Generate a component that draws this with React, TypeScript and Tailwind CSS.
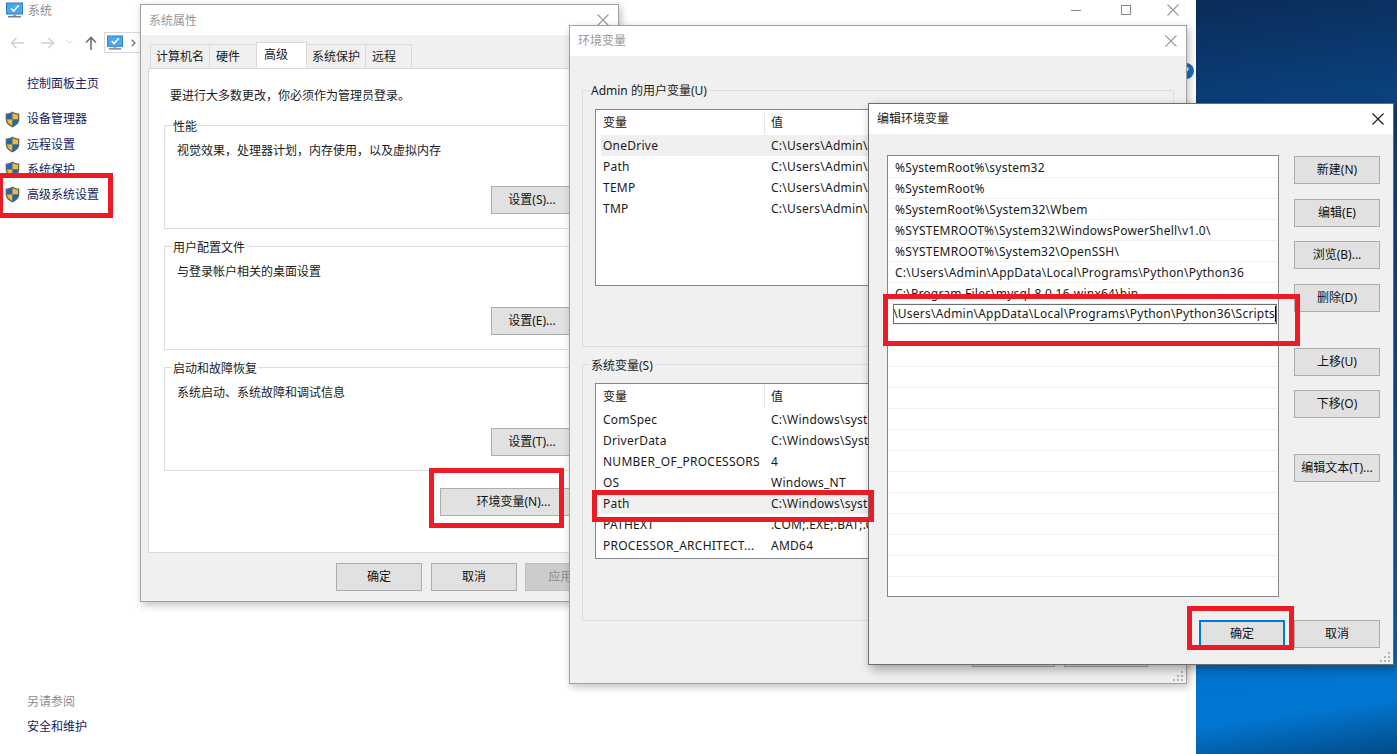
import React from "react";

const Close = ({ dark = false, className = "" }: { dark?: boolean; className?: string }) => (
  <svg width="12" height="12" viewBox="0 0 12 12" className={className} stroke={dark ? "#1a1a1a" : "#9a9a9a"} strokeWidth="1.1" fill="none">
    <path d="M.5.5l11 11M11.5.5l-11 11" />
  </svg>
);

const Monitor = ({ size = 17 }: { size?: number }) => (
  <svg width={size} height={size} viewBox="0 0 17 16">
    <rect x="0.5" y="0.5" width="16" height="11" fill="#4aa8ec" stroke="#2a7fc4" />
    <path d="M5 6l2.6 2.6L12.5 3" stroke="#fff" strokeWidth="1.6" fill="none" />
    <rect x="7" y="12" width="3" height="1.5" fill="#8aa0b4" />
    <rect x="2" y="13.5" width="13" height="1.5" fill="#6d8296" />
  </svg>
);

const Shield = () => (
  <svg width="15" height="17" viewBox="0 0 15 17" className="shrink-0">
    <path d="M7.5.5C5.5 2 3 2.6.7 2.6v6c0 3.6 3 6.200 6.800 7.900 3.800-1.700 6.800-4.300 6.800-7.900v-6C12 2.600 9.500 2 7.500.5z" fill="#5f6468" />
    <path d="M7.500 2C6 3 4 3.500 2 3.700V8.500h5.500z" fill="#1b69b8" />
    <path d="M7.500 2C9 3 11 3.500 13 3.700V8.500H7.500z" fill="#f6b928" />
    <path d="M2 8.500h5.500v6.300C4.500 13.400 2 11.400 2 8.500z" fill="#f6b928" />
    <path d="M13 8.500H7.500v6.300c3-1.400 5.500-3.400 5.500-6.300z" fill="#1b69b8" />
  </svg>
);

const Grip = () => (
  <svg width="11" height="11" viewBox="0 0 11 11" fill="#b5b5b5">
    <rect x="8" y="0" width="2" height="2" />
    <rect x="4" y="4" width="2" height="2" />
    <rect x="8" y="4" width="2" height="2" />
    <rect x="0" y="8" width="2" height="2" />
    <rect x="4" y="8" width="2" height="2" />
    <rect x="8" y="8" width="2" height="2" />
  </svg>
);

const Btn = ({ children, className = "" }: { children: React.ReactNode; className?: string }) => (
  <div className={`h-[28px] shrink-0 flex items-center justify-center bg-[#e1e1e1] border border-[#adadad] text-[#111] whitespace-nowrap ${className}`}>
    {children}
  </div>
);

const Group = ({ title, children, className = "", labelClass = "-top-[7px]" }: { title: string; children: React.ReactNode; className?: string; labelClass?: string }) => (
  <div className={`relative border border-[#dcdcdc] ${className}`}>
    <span className={`absolute left-[7px] bg-inherit px-[1px] leading-[16px] whitespace-nowrap ${labelClass}`}>{title}</span>
    {children}
  </div>
);

const PerfGroup = ({ title, text, btn }: { title: string; text: string; btn: string }) => (
  <Group title={title} className="h-[104px] w-[431px] bg-white">
    <div className="pl-[12px] pt-[17px] h-[44px] leading-[16px]">{text}</div>
    <Btn className="w-[82px] ml-[326px] mt-[16px]">{btn}</Btn>
  </Group>
);

const VarList = ({ rows, active, className = "" }: { rows: [string, string][]; active: string; className?: string }) => (
  <div className={`ml-[12px] w-[566px] bg-white border border-[#828790] overflow-hidden pl-[5px] ${className}`}>
    <div className="flex h-[25px] items-center">
      <div className="w-[163px] pl-[2px] text-[#111]">变量</div>
      <div className="w-px h-[23px] bg-[#e5e5e5]" />
      <div className="pl-[6px]">值</div>
    </div>
    {rows.map(([k, v]) => (
      <div key={k} className={`flex h-[21px] items-center whitespace-nowrap tracking-[0.25px] ${k === active ? "bg-[#f0f0f0]" : ""}`}>
        <div className="w-[164px] pl-[2px] overflow-hidden">{k}</div>
        <div className="ml-[6px] w-[98px] overflow-hidden">{v}</div>
      </div>
    ))}
  </div>
);

const pathRows = [
  "%SystemRoot%\\system32",
  "%SystemRoot%",
  "%SystemRoot%\\System32\\Wbem",
  "%SYSTEMROOT%\\System32\\WindowsPowerShell\\v1.0\\",
  "%SYSTEMROOT%\\System32\\OpenSSH\\",
  "C:\\Users\\Admin\\AppData\\Local\\Programs\\Python\\Python36",
  "C:\\Program Files\\mysql-8.0.16-winx64\\bin",
];

const Red = ({ className }: { className: string }) => (
  <div className={`absolute border-[5px] border-[#ed1c24] ${className}`} />
);

const tabOff = "border border-b-0 border-[#d9d9d9] bg-[#f0f0f0] flex items-center pt-px";

export default function App() {
  return (
    <div className="relative w-[1397px] h-[754px] overflow-hidden flex text-[12px] leading-[16px] text-[#1a1a1a] font-['Noto_Sans','Noto_Sans_CJK_SC',sans-serif]">
      {/* Main system window */}
      <div className="w-[1196px] h-full bg-white flex flex-col">
        <div className="flex h-[20px] items-center justify-between">
          <div className="flex items-center">
            <div className="ml-[6px] mr-[5px] flex"><Monitor /></div>
            <span className="text-[#8c8c8c] pt-[2px]">系统</span>
          </div>
          <div className="flex items-center text-[#8a8a8a]">
            <div className="w-[10px] h-px bg-[#8a8a8a] mr-[40px]" />
            <div className="w-[10px] h-[10px] border border-[#8a8a8a] mr-[36px]" />
            <Close className="mr-[17px]" />
          </div>
        </div>
        <div className="flex h-[21px] mt-[12px] items-center text-[#c8c8c8]">
          <svg width="14" height="12" viewBox="0 0 14 12" className="ml-[10px]" fill="none" stroke="#d0d0d0" strokeWidth="1.5"><path d="M14 6H1.500M6.500 1l-5 5 5 5" /></svg>
          <svg width="14" height="12" viewBox="0 0 14 12" className="ml-[17px]" fill="none" stroke="#d0d0d0" strokeWidth="1.5"><path d="M0 6h12.500M7.500 1l5 5-5 5" /></svg>
          <svg width="7" height="5" viewBox="0 0 7 5" className="ml-[11px]" fill="none" stroke="#d0d0d0"><path d="M.5.500l3 3 3-3" /></svg>
          <svg width="12" height="14" viewBox="0 0 12 14" className="ml-[12px]" fill="none" stroke="#6e6e6e" strokeWidth="1.600"><path d="M6 14V1.500M1 6.500l5-5 5 5" /></svg>
          <div className="ml-[7px] h-[21px] w-[60px] border border-[#d9d9d9] flex items-center pl-[2px]">
            <Monitor size={16} />
            <svg width="5" height="8" viewBox="0 0 5 8" className="ml-[8px]" fill="none" stroke="#777" strokeWidth="1.300"><path d="M.7.700L4 4 .7 7.300" /></svg>
          </div>
        </div>
        <div className="mt-[23px] ml-[27px] leading-[16px] text-[#14225f]">控制面板主页</div>
        <div className="mt-[14px] flex flex-col text-[#14225f]">
          {["设备管理器", "远程设置", "系统保护", "高级系统设置"].map((t, i) => (
            <div key={t} className={`flex items-center pl-[5px] h-[25px] gap-[7px] ${i === 0 ? "h-[26px]" : ""}`}>
              <Shield />
              <span>{t}</span>
            </div>
          ))}
        </div>
        <div className="mt-auto ml-[27px] mb-[19px] flex flex-col gap-[9px] leading-[16px]">
          <span className="text-[#8c8c8c]">另请参阅</span>
          <span className="text-[#14225f]">安全和维护</span>
        </div>
      </div>

      {/* Desktop wallpaper */}
      <div className="flex-1 h-full bg-[linear-gradient(172deg,#0a2c58_0%,#0a4a8e_22%,#0a5ba8_55%,#0076d2_90%,#0276d0_93%,#024b88_100%)]" />

      {/* Help button, mostly behind the dialog */}
      <div className="absolute left-[1178px] top-[63px] w-[16px] h-[16px] rounded-full bg-[#1570c4] flex items-center justify-center text-white font-bold text-[11px]">
        ?
      </div>

      {/* 系统属性 */}
      <div className="absolute left-[140px] top-[4px] w-[479px] h-[598px] bg-[#f0f0f0] border border-[#a0a0a0] shadow-[2px_3px_8px_rgba(0,0,0,0.25)] flex flex-col">
        <div className="h-[30px] bg-white flex items-center justify-between pl-[8px] pr-[9px] text-[#999]">
          <span className="pt-px">系统属性</span>
          <Close />
        </div>
        <div className="pt-[9px] px-[7px] flex flex-col">
          <div className="flex h-[24px] pl-[2px]">
            <div className={`w-[59px] border-r-0 pl-[5px] ${tabOff}`}>计算机名</div>
            <div className={`w-[47px] border-r-0 pl-[6px] ${tabOff}`}>硬件</div>
            <div className="w-[51px] h-[26px] -mt-[2px] border border-b-0 border-[#d9d9d9] bg-white z-10 flex items-center pl-[7px] pb-[2px]">高级</div>
            <div className={`w-[59px] border-l-0 pl-[5px] ${tabOff}`}>系统保护</div>
            <div className={`w-[46px] border-l-0 pl-[6px] ${tabOff}`}>远程</div>
          </div>
          <div className="h-[485px] w-[463px] bg-white border border-[#d9d9d9] flex flex-col">
            <div className="pt-[19px] pl-[21px] leading-[16px]">要进行大多数更改，你必须作为管理员登录。</div>
            <div className="mt-[21px] ml-[15px] flex flex-col gap-[17px]">
              <PerfGroup title="性能" text="视觉效果，处理器计划，内存使用，以及虚拟内存" btn="设置(S)..." />
              <PerfGroup title="用户配置文件" text="与登录帐户相关的桌面设置" btn="设置(E)..." />
              <PerfGroup title="启动和故障恢复" text="系统启动、系统故障和调试信息" btn="设置(T)..." />
            </div>
            <Btn className="w-[147px] ml-[291px] mt-[17px]">环境变量(N)...</Btn>
          </div>
          <div className="flex mt-[10px] ml-[188px]">
            <Btn className="w-[86px]">确定</Btn>
            <Btn className="w-[86px] ml-[9px]">取消</Btn>
            <Btn className="w-[86px] ml-[8px] !bg-[#cccccc] !border-[#bfbfbf] !text-[#8a8a8a]">应用(A)</Btn>
          </div>
        </div>
      </div>

      {/* 环境变量 */}
      <div className="absolute left-[569px] top-[25px] w-[618px] h-[659px] bg-[#f0f0f0] border border-[#a0a0a0] shadow-[2px_3px_8px_rgba(0,0,0,0.25)] flex flex-col">
        <div className="h-[30px] bg-white flex items-center justify-between pl-[8px] pr-[9px] text-[#999] shrink-0">
          <span>环境变量</span>
          <Close />
        </div>
        <div className="pt-[34px] pl-[12px] flex flex-col">
          <Group title="Admin 的用户变量(U)" labelClass="-top-[8px]" className="w-[592px] h-[257px] bg-[#f0f0f0] pt-[18px]">
            <VarList
              className="h-[177px]"
              active="OneDrive"
              rows={[
                ["OneDrive", "C:\\Users\\Admin\\OneDrive"],
                ["Path", "C:\\Users\\Admin\\AppData\\Local"],
                ["TEMP", "C:\\Users\\Admin\\AppData\\Local"],
                ["TMP", "C:\\Users\\Admin\\AppData\\Local"],
              ]}
            />
          </Group>
          <Group title="系统变量(S)" className="mt-[17px] w-[592px] h-[257px] bg-[#f0f0f0] pt-[18px]">
            <VarList
              className="h-[176px]"
              active="Path"
              rows={[
                ["ComSpec", "C:\\Windows\\system32\\cmd.exe"],
                ["DriverData", "C:\\Windows\\System32\\Drivers"],
                ["NUMBER_OF_PROCESSORS", "4"],
                ["OS", "Windows_NT"],
                ["Path", "C:\\Windows\\system32;C:\\Windows"],
                ["PATHEXT", ".COM;.EXE;.BAT;.CMD;.VBS"],
                ["PROCESSOR_ARCHITECT...", "AMD64"],
              ]}
            />
          </Group>
          <div className="flex mt-[18px] ml-[390px] gap-[9px]">
            <Btn className="w-[83px]">确定</Btn>
            <Btn className="w-[84px]">取消</Btn>
          </div>
        </div>
        <div className="mt-auto self-end mr-[2px] mb-[1px] flex"><Grip /></div>
      </div>

      {/* 编辑环境变量 */}
      <div className="absolute left-[868px] top-[103px] w-[526px] h-[562px] bg-[#f0f0f0] border border-[#6e6e6e] shadow-[3px_4px_10px_rgba(0,0,0,0.35)] flex flex-col">
        <div className="h-[30px] bg-white flex items-center justify-between pl-[8px] pr-[9px] shrink-0">
          <span>编辑环境变量</span>
          <Close dark />
        </div>
        <div className="pt-[21px] pl-[18px] flex">
          <div className="w-[392px] h-[442px] bg-white border border-[#828790] flex flex-col overflow-hidden tracking-[0.22px] pt-px">
            {pathRows.map((r) => (
              <div key={r} className="h-[21px] mx-[1px] shrink-0 flex items-center pl-[6px] pt-[1px] border-b border-[#f0f0f0] whitespace-nowrap">{r}</div>
            ))}
            <div className="h-[21px] mx-[1px] shrink-0 flex items-start pl-[4px] border-b border-[#f0f0f0]">
              <div className="w-[384px] h-[20px] border border-[#6e6e6e] flex justify-end items-center overflow-hidden whitespace-nowrap">
                <span className="border-r border-black leading-[16px] shrink-0">C:\Users\Admin\AppData\Local\Programs\Python\Python36\Scripts</span>
              </div>
            </div>
            {Array.from({ length: 12 }).map((_, i) => (
              <div key={i} className="h-[21px] mx-[1px] shrink-0 border-b border-[#f0f0f0]" />
            ))}
          </div>
          <div className="ml-[15px] pt-px flex flex-col">
            <Btn className="w-[86px]">新建(N)</Btn>
            <Btn className="w-[86px] mt-[15px]">编辑(E)</Btn>
            <Btn className="w-[86px] mt-[14px]">浏览(B)...</Btn>
            <Btn className="w-[86px] mt-[15px]">删除(D)</Btn>
            <Btn className="w-[86px] mt-[36px]">上移(U)</Btn>
            <Btn className="w-[86px] mt-[14px]">下移(O)</Btn>
            <Btn className="w-[86px] mt-[36px]">编辑文本(T)...</Btn>
          </div>
        </div>
        <div className="flex justify-end gap-[9px] mt-[23px] pr-[13px]">
          <Btn className="w-[86px] !border-2 !border-[#0078d7]">确定</Btn>
          <Btn className="w-[86px]">取消</Btn>
        </div>
        <div className="mt-auto self-end mr-[2px] mb-[1px] flex"><Grip /></div>
      </div>

      {/* Annotation boxes */}
      <Red className="left-[-2px] top-[173px] w-[115px] h-[45px]" />
      <Red className="left-[429px] top-[468px] w-[135px] h-[60px]" />
      <Red className="left-[592px] top-[490px] w-[282px] h-[32px]" />
      <Red className="left-[883px] top-[294px] w-[417px] h-[52px]" />
      <Red className="left-[1187px] top-[606px] w-[107px] h-[44px]" />
    </div>
  );
}
